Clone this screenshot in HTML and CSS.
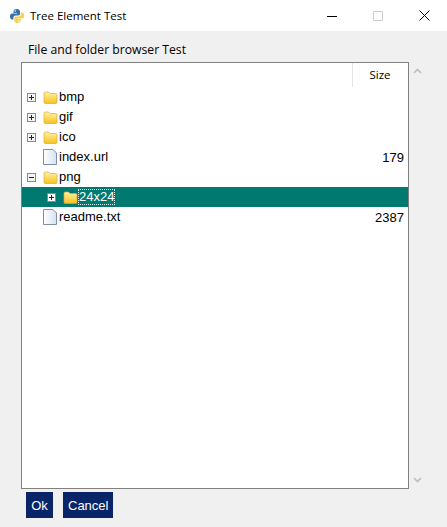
FILE: index.html
```html
<!DOCTYPE html>
<html lang="en">
<head>
    <meta charset="UTF-8">
    <meta name="viewport" content="width=device-width, initial-scale=1.0">
    <title>Tree Element Test</title>
    <link rel="stylesheet" href="styles.css">
</head>

<body>
    <!-- Icons shared by the rows -->
    <svg class="icon-defs" width="0" height="0">
        <defs>
            <linearGradient id="folder-fill" x1="0" y1="0" x2="0" y2="1">
                <stop offset="0" stop-color="#fff3a6"/>
                <stop offset="1" stop-color="#f6c21c"/>
            </linearGradient>
            <linearGradient id="file-fill" x1="0" y1="0" x2="1" y2="0">
                <stop offset="0" stop-color="#fff"/>
                <stop offset="1" stop-color="#d5e2f2"/>
            </linearGradient>
            <symbol id="folder-icon" viewBox="0 0 15 13">
                <path d="M1 2.500C1 1.500 1.500 1 2.500 1h3l1.500 1.500h5.500c1 0 1.500.5 1.500 1.500v7c0 1-.5 1.500-1.500 1.500h-10C1.500 12.500 1 12 1 11z" fill="url(#folder-fill)" stroke="#d9a93a" stroke-width=".7"/>
            </symbol>
            <symbol id="file-icon" viewBox="0 0 14 16">
                <path d="M.5.500h9.500l3.500 3.500v11.500h-13z" fill="url(#file-fill)" stroke="#7f8ea3"/>
            </symbol>
        </defs>
    </svg>

    <!-- Title bar -->
    <header class="titlebar">
        <svg class="app-icon" width="16" height="16" viewBox="0 0 16 16">
            <path d="M8 1C5.500 1 4.500 2 4.500 3.500V5H8v.6H3C1.500 5.600 1 7 1 8.600 1 10.300 1.700 11.500 3 11.500h1.400V9.800C4.400 8.500 5.400 7.500 6.800 7.500h2.600C10.500 7.500 11 6.800 11 5.800V3.300C11 2 9.800 1 8 1z" fill="#3a72a8"/>
            <path d="M8.300 15c2.500 0 3.500-1 3.500-2.500V11H8.300v-.6H13c1.600 0 2.200-1.300 2.200-3 0-1.700-.7-2.900-2-2.900h-1.400v1.700c0 1.300-1 2.300-2.400 2.300H6.900C5.800 8.500 5.300 9.200 5.300 10.200v2.500C5.300 14 6.500 15 8.300 15z" fill="#f7d154"/>
            <circle cx="6.300" cy="3" r=".7" fill="#fff"/>
            <circle cx="9.900" cy="13" r=".7" fill="#fff"/>
        </svg>
        <span class="title-text">Tree Element Test</span>
        <div class="win-controls">
            <div class="win-btn">
                <svg width="10" height="10" viewBox="0 0 10 10"><path d="M0 5.500h10" stroke="#000" fill="none"/></svg>
            </div>
            <div class="win-btn">
                <svg width="10" height="10" viewBox="0 0 10 10"><path d="M.5.500h9v9h-9z" stroke="#ccc" fill="none"/></svg>
            </div>
            <div class="win-btn">
                <svg width="11" height="11" viewBox="0 0 11 11"><path d="M.5.500l10 10M10.500.500l-10 10" stroke="#000" fill="none"/></svg>
            </div>
        </div>
    </header>

    <main class="window-body">
        <div class="caption">File and folder browser Test</div>

        <div class="tree-area">
            <div class="tree">
                <div class="tree-head">
                    <div class="head-cell">Size</div>
                </div>

                <div class="row">
                    <span class="expander plus"></span>
                    <svg class="folder"><use href="#folder-icon"/></svg>
                    <span class="name">bmp</span>
                </div>
                <div class="row">
                    <span class="expander plus"></span>
                    <svg class="folder"><use href="#folder-icon"/></svg>
                    <span class="name">gif</span>
                </div>
                <div class="row">
                    <span class="expander plus"></span>
                    <svg class="folder"><use href="#folder-icon"/></svg>
                    <span class="name">ico</span>
                </div>
                <div class="row">
                    <span class="expander none"></span>
                    <svg class="file"><use href="#file-icon"/></svg>
                    <span class="name">index.url</span>
                    <span class="size">179</span>
                </div>
                <div class="row">
                    <span class="expander minus"></span>
                    <svg class="folder"><use href="#folder-icon"/></svg>
                    <span class="name">png</span>
                </div>
                <div class="row selected child">
                    <span class="expander plus"></span>
                    <svg class="folder"><use href="#folder-icon"/></svg>
                    <span class="name">24x24</span>
                </div>
                <div class="row">
                    <span class="expander none"></span>
                    <svg class="file"><use href="#file-icon"/></svg>
                    <span class="name">readme.txt</span>
                    <span class="size">2387</span>
                </div>
            </div>

            <div class="scrollbar">
                <svg width="9" height="6" viewBox="0 0 9 6"><path d="M1 5l3.500-3.500L8 5" stroke="#bdbdbd" stroke-width="1.600" fill="none"/></svg>
                <svg width="9" height="6" viewBox="0 0 9 6"><path d="M1 1l3.500 3.500L8 1" stroke="#bdbdbd" stroke-width="1.600" fill="none"/></svg>
            </div>
        </div>

        <div class="buttons">
            <button class="btn">Ok</button>
            <button class="btn">Cancel</button>
        </div>
    </main>
</body>
</html>
```

FILE: styles.css
```css
/* General layout */
html, body {
    height: 100%;
}

body {
    margin: 0;
    display: flex;
    flex-direction: column;
    background-color: #f0f0f0;
    color: #000;
    font-family: 'Liberation Sans', Arial, sans-serif;
    overflow: hidden;
}

.icon-defs {
    flex-shrink: 0;
}

/* Title bar */
.titlebar {
    height: 31px;
    display: flex;
    align-items: center;
    padding-left: 9px;
    background: #fff;
    flex-shrink: 0;
}

.app-icon {
    margin-right: 5px;
}

.title-text {
    font-family: 'Open Sans', sans-serif;
    font-size: 11.5px;
}

.win-controls {
    margin-left: auto;
    display: flex;
}

.win-btn {
    width: 46px;
    height: 31px;
    display: flex;
    align-items: center;
    justify-content: center;
}

/* Window contents */
.window-body {
    flex: 1;
    display: flex;
    flex-direction: column;
    padding-left: 21px;
}

.caption {
    margin: 11px 0 4px 7px;
    height: 16px;
    font-family: 'Open Sans', sans-serif;
    font-size: 12.2px;
    line-height: 16px;
}

.tree-area {
    display: flex;
}

.tree {
    box-sizing: border-box;
    width: 388px;
    height: 427px;
    background: #fff;
    border: 1px solid #808080;
    font-size: 13px;
}

.tree-head {
    height: 24px;
    display: flex;
    justify-content: flex-end;
    padding-right: 1px;
}

.head-cell {
    width: 55px;
    box-sizing: border-box;
    border-left: 1px solid #e5e5e5;
    text-align: center;
    font-family: 'Open Sans', sans-serif;
    font-size: 11.5px;
    line-height: 24px;
}

.row {
    height: 20px;
    display: flex;
    align-items: center;
    padding-left: 5px;
    padding-right: 4px;
}

.row.child {
    padding-left: 25px;
}

.row.selected {
    background: #007a70;
    color: #fff;
}

.row.selected .name {
    outline: 1px dotted #d8ece9;
    outline-offset: -1px;
}

.expander {
    position: relative;
    box-sizing: border-box;
    width: 9px;
    height: 9px;
    margin-right: 7px;
    border: 1px solid #8a8a8a;
    background: #f4f4f4;
}

.row.selected .expander {
    background: #fff;
}

.expander.none {
    border: none;
    background: none;
}

/* plus and minus marks drawn over the box */
.expander.plus::before,
.expander.minus::before {
    content: "";
    position: absolute;
    left: 1px;
    top: 3px;
    width: 5px;
    height: 1px;
    background: #222;
}

.expander.plus::after {
    content: "";
    position: absolute;
    left: 3px;
    top: 1px;
    width: 1px;
    height: 5px;
    background: #222;
}

.folder {
    width: 15px;
    height: 13px;
    flex-shrink: 0;
}

.file {
    width: 14px;
    height: 16px;
    margin-right: 1px;
    flex-shrink: 0;
}

.name {
    padding: 0 1px;
    line-height: 16px;
}

.size {
    margin-left: auto;
}

.scrollbar {
    width: 17px;
    height: 427px;
    padding: 6px 0;
    box-sizing: border-box;
    display: flex;
    flex-direction: column;
    align-items: center;
    justify-content: space-between;
}

/* Buttons */
.buttons {
    display: flex;
    gap: 10px;
    margin: 3px 0 0 5px;
}

.btn {
    height: 26px;
    min-width: 27px;
    padding: 0 5px;
    border: none;
    background: #082567;
    color: #fff;
    font-family: 'Liberation Sans', Arial, sans-serif;
    font-size: 13px;
}
```
